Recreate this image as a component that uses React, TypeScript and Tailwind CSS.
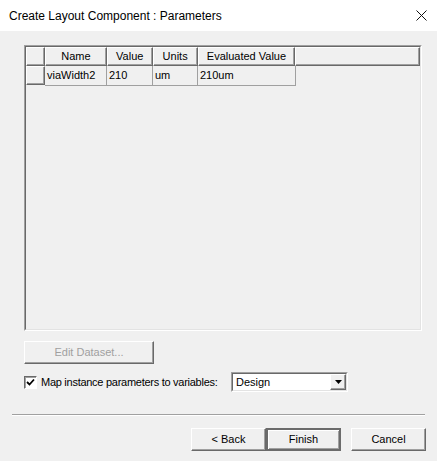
import React from "react"

const cols = [19, 62, 46, 45, 98]
const headers = ["Name", "Value", "Units", "Evaluated Value"]
const row = ["viaWidth2", "210", "um", "210um"]

// classic raised 3D edge used by buttons and header cells
const raised =
    "border border-t-white border-l-white border-r-[#696969] border-b-[#696969] shadow-[inset_-1px_-1px_0_#a0a0a0]"

function HeaderCell({ w, children }: { w: number | string; children?: React.ReactNode }) {
    return (
        <div
            className={`h-[19px] flex items-center justify-center bg-[#f0f0f0] ${raised}`}
            style={{ width: w }}
        >
            {children}
        </div>
    )
}

function PushButton({ label, primary, disabled, w }: { label: string; primary?: boolean; disabled?: boolean; w: number }) {
    return (
        <button
            type="button"
            className={`h-[23px] bg-[#f0f0f0] flex items-center justify-center ${
                primary
                    ? "border-2 border-[#6b6b6b] shadow-[inset_1px_1px_0_white,inset_-1px_-1px_0_#a0a0a0]"
                    : raised
            } ${disabled ? "text-[#a0a0a0]" : "text-black"}`}
            style={{ width: w }}
        >
            {label}
        </button>
    )
}

export default function App() {
    return (
        <div
            className="w-[437px] h-[461px] bg-[#f0f0f0] flex flex-col text-[11px] text-black overflow-hidden"
            style={{ fontFamily: '"Liberation Sans", Arial, sans-serif' }}
        >
            {/* Title bar */}
            <div className="h-[31px] bg-white flex items-center justify-between pl-[9px] pr-[10px] shrink-0">
                <span className="text-[12px] text-black">Create Layout Component : Parameters</span>
                <svg width="11" height="11" viewBox="0 0 11 11">
                    <path d="M0.5 0.5 L10.5 10.5 M10.5 0.5 L0.5 10.5" stroke="#111" strokeWidth="1" />
                </svg>
            </div>

            <div className="flex flex-col pl-[24px] pr-[15px]">
                {/* Parameter grid */}
                <div className="mt-[14px] h-[286px] w-[398px] border border-t-[#a0a0a0] border-l-[#a0a0a0] border-r-white border-b-white">
                    <div className="h-full border border-t-[#696969] border-l-[#696969] border-r-[#e3e3e3] border-b-[#e3e3e3] bg-[#f0f0f0]">
                        <div className="flex">
                            <HeaderCell w={cols[0]} />
                            {headers.map((h, i) => (
                                <HeaderCell key={h} w={cols[i + 1]}>
                                    {h}
                                </HeaderCell>
                            ))}
                            <HeaderCell w="125px" />
                        </div>
                        <div className="flex">
                            <HeaderCell w={cols[0]} />
                            {row.map((v, i) => (
                                <div
                                    key={i}
                                    className="h-[20px] flex items-center pl-[2px] border-r border-b border-[#a0a0a0] bg-[#f0f0f0]"
                                    style={{ width: cols[i + 1] }}
                                >
                                    {v}
                                </div>
                            ))}
                        </div>
                    </div>
                </div>

                <div className="mt-[10px]">
                    <PushButton label="Edit Dataset..." disabled w={130} />
                </div>

                {/* Mapping option */}
                <div className="mt-[8px] flex items-center h-[20px]">
                    <div className="w-[13px] h-[13px] bg-white border border-t-[#696969] border-l-[#696969] border-r-white border-b-white shadow-[inset_1px_1px_0_#a0a0a0] flex items-center justify-center">
                        <svg width="9" height="9" viewBox="0 0 9 9">
                            <path d="M1 4 L3.5 6.5 L8 1.5" stroke="#000" strokeWidth="1.8" fill="none" />
                        </svg>
                    </div>
                    <span className="ml-[4px] w-[190px] tracking-[-0.27px]">Map instance parameters to variables:</span>
                    <div className="w-[117px] h-[20px] bg-white border border-t-[#a0a0a0] border-l-[#a0a0a0] border-r-white border-b-white flex">
                        <div className="flex-1 flex border border-t-[#696969] border-l-[#696969] border-r-[#e3e3e3] border-b-[#e3e3e3]">
                            <span className="flex-1 pl-[3px] leading-[16px]">Design</span>
                            <div className={`w-[16px] h-[16px] bg-[#f0f0f0] flex items-center justify-center ${raised}`}>
                                <svg width="7" height="4" viewBox="0 0 7 4">
                                    <path d="M0 0 H7 L3.5 4 Z" fill="#000" />
                                </svg>
                            </div>
                        </div>
                    </div>
                </div>
            </div>

            {/* Separator */}
            <div className="mt-[22px] mx-[12px] h-[2px] border-t border-t-[#a0a0a0] border-b border-b-white" />

            {/* Wizard buttons */}
            <div className="mt-[12px] flex pl-[191px]">
                <PushButton label="< Back" w={75} />
                <PushButton label="Finish" primary w={75} />
                <div className="ml-[10px]">
                    <PushButton label="Cancel" w={75} />
                </div>
            </div>
        </div>
    )
}
